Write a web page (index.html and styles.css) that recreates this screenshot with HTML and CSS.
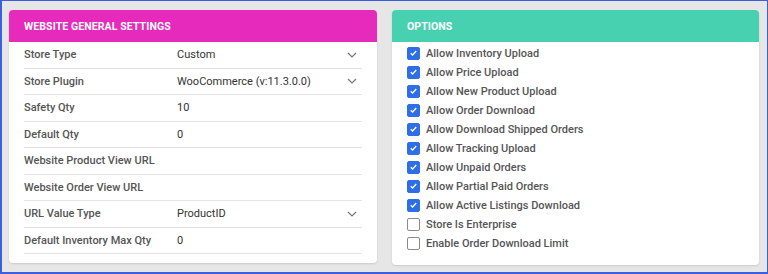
FILE: index.html
```html
<!DOCTYPE html>
<html>
<head>
<meta charset="utf-8">
<link rel="stylesheet" href="styles.css">
</head>
<body>
<div class="frame">
  <section class="card">
    <div class="card-head head-pink">WEBSITE GENERAL SETTINGS</div>
    <div class="card-body settings">
      <div class="row"><span class="lbl">Store Type</span><span class="val">Custom</span><svg class="chev" viewBox="0 0 10 6"><path d="M1 1l4 4 4-4"/></svg></div>
      <div class="row"><span class="lbl">Store Plugin</span><span class="val">WooCommerce (v:11.3.0.0)</span><svg class="chev" viewBox="0 0 10 6"><path d="M1 1l4 4 4-4"/></svg></div>
      <div class="row"><span class="lbl">Safety Qty</span><span class="val">10</span></div>
      <div class="row"><span class="lbl">Default Qty</span><span class="val">0</span></div>
      <div class="row"><span class="lbl">Website Product View URL</span><span class="val"></span></div>
      <div class="row"><span class="lbl">Website Order View URL</span><span class="val"></span></div>
      <div class="row"><span class="lbl">URL Value Type</span><span class="val">ProductID</span><svg class="chev" viewBox="0 0 10 6"><path d="M1 1l4 4 4-4"/></svg></div>
      <div class="row"><span class="lbl">Default Inventory Max Qty</span><span class="val">0</span></div>
    </div>
  </section>
  <section class="card">
    <div class="card-head head-teal">OPTIONS</div>
    <div class="card-body options">
      <div class="opt"><span class="cb on"><svg viewBox="0 0 12 12"><path d="M3 6.2l2 2 4-4.4"/></svg></span>Allow Inventory Upload</div>
      <div class="opt"><span class="cb on"><svg viewBox="0 0 12 12"><path d="M3 6.2l2 2 4-4.4"/></svg></span>Allow Price Upload</div>
      <div class="opt"><span class="cb on"><svg viewBox="0 0 12 12"><path d="M3 6.2l2 2 4-4.4"/></svg></span>Allow New Product Upload</div>
      <div class="opt"><span class="cb on"><svg viewBox="0 0 12 12"><path d="M3 6.2l2 2 4-4.4"/></svg></span>Allow Order Download</div>
      <div class="opt"><span class="cb on"><svg viewBox="0 0 12 12"><path d="M3 6.2l2 2 4-4.4"/></svg></span>Allow Download Shipped Orders</div>
      <div class="opt"><span class="cb on"><svg viewBox="0 0 12 12"><path d="M3 6.2l2 2 4-4.4"/></svg></span>Allow Tracking Upload</div>
      <div class="opt"><span class="cb on"><svg viewBox="0 0 12 12"><path d="M3 6.2l2 2 4-4.4"/></svg></span>Allow Unpaid Orders</div>
      <div class="opt"><span class="cb on"><svg viewBox="0 0 12 12"><path d="M3 6.2l2 2 4-4.4"/></svg></span>Allow Partial Paid Orders</div>
      <div class="opt"><span class="cb on"><svg viewBox="0 0 12 12"><path d="M3 6.2l2 2 4-4.4"/></svg></span>Allow Active Listings Download</div>
      <div class="opt"><span class="cb"></span>Store Is Enterprise</div>
      <div class="opt"><span class="cb"></span>Enable Order Download Limit</div>
    </div>
  </section>
</div>
</body>
</html>
```
FILE: styles.css
```css
* { box-sizing: border-box; }
html, body { margin: 0; padding: 0; }
body {
  font-family: Roboto, "Liberation Sans", sans-serif;
  font-size: 11px;
  background: #e6e6e6;
}
.frame {
  width: 768px;
  height: 274px;
  border: 2px solid #3b5fe0;
  border-top-width: 1px;
  border-right-width: 1px;
  background: #e6e6e6;
  padding: 9px 8px 0 7px;
  display: grid;
  grid-template-columns: 368px 367px;
  column-gap: 15px;
  align-items: start;
}
.card {
  background: #fff;
  border-radius: 4px;
  box-shadow: 0 1px 2px rgba(0,0,0,0.12);
  overflow: hidden;
}
.card-head {
  height: 32px;
  padding: 0 15px;
  display: flex;
  align-items: center;
  color: #fff;
  font-weight: 700;
  font-size: 10.5px;
  letter-spacing: 0.1px;
}
.head-pink { background: #e62abc; }
.head-teal { background: #47d1b1; }
.settings { padding: 0 15px 9px; }
.row {
  height: 26.5px;
  border-bottom: 1px solid #e4e4e4;
  display: flex;
  align-items: center;
}
.lbl {
  width: 153px;
  flex: none;
  color: #555;
  font-weight: 500;
}
.val {
  flex: 1;
  color: #333;
}
.chev {
  width: 10px;
  height: 6px;
  margin-right: 5px;
  fill: none;
  stroke: #777;
  stroke-width: 1.2;
}
.options { padding: 1.5px 15px 12px; }
.opt {
  height: 19px;
  display: flex;
  align-items: center;
  color: #555;
  font-weight: 500;
}
.cb {
  width: 13px;
  height: 13px;
  border-radius: 2px;
  border: 1px solid #8a8a8a;
  margin-right: 6px;
  flex: none;
  display: flex;
  align-items: center;
  justify-content: center;
}
.cb.on {
  background: #2e6ee8;
  border-color: #2e6ee8;
}
.cb svg {
  width: 12px;
  height: 12px;
  fill: none;
  stroke: #fff;
  stroke-width: 1.4;
}
```
